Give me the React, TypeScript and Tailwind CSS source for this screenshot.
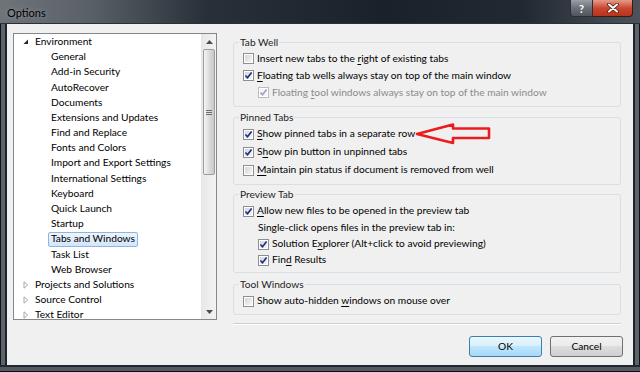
import React from 'react';

const FONT = "font-['Segoe_UI','Lato','Noto_Sans',sans-serif]";

// "&" marks the access key, as in a Win32 resource string
const Label = ({ text }: { text: string }) => {
  const i = text.indexOf('&');
  if (i < 0) return <>{text}</>;
  return (
    <>
      {text.slice(0, i)}
      <span className="underline underline-offset-[2px]">{text[i + 1]}</span>
      {text.slice(i + 2)}
    </>
  );
};

const CheckBox = ({ checked, disabled }: { checked?: boolean; disabled?: boolean }) => (
  <span
    className={`flex h-[11px] w-[11px] shrink-0 items-center justify-center border bg-white ${
      disabled ? 'border-[#bcbcbc]' : 'border-[#8e8f8f]'
    }`}
  >
    <span
      className={`flex h-[7px] w-[7px] items-center justify-center overflow-visible ${
        disabled ? 'bg-[#f4f4f4]' : 'bg-gradient-to-br from-[#d6d6d6] to-[#f6f6f6]'
      }`}
    >
      {checked && (
        <svg width="9" height="9" viewBox="0 0 9 9" className="shrink-0">
          <path
            d="M1.4 4.5 L3.5 6.8 L7.6 1.6"
            fill="none"
            stroke={disabled ? '#9aa4b8' : '#1d2a86'}
            strokeWidth="1.6"
          />
        </svg>
      )}
    </span>
  </span>
);

const Option = ({
  label,
  checked,
  disabled,
  indent,
  h,
}: {
  label: string;
  checked?: boolean;
  disabled?: boolean;
  indent?: boolean;
  h: string;
}) => (
  <div className={`flex items-center gap-[3px] ${indent ? 'pl-[24px]' : 'pl-[9px]'} ${h}`}>
    <CheckBox checked={checked} disabled={disabled} />
    <span className={`whitespace-nowrap ${disabled ? 'text-[#8a8a8a]' : 'text-black'}`}>
      <Label text={label} />
    </span>
  </div>
);

const Group = ({ title, className, children }: { title: string; className: string; children: React.ReactNode }) => (
  <fieldset className={`rounded-[3px] border border-[#d5dfe5] ${className}`}>
    <legend className="ml-[5px] px-[1px] leading-[16px] text-[#1e1e1e]">{title}</legend>
    {children}
  </fieldset>
);

type TreeItem = { name: string; level: 0 | 1; expanded?: boolean; selected?: boolean };

const tree: TreeItem[] = [
  { name: 'Environment', level: 0, expanded: true },
  { name: 'General', level: 1 },
  { name: 'Add-in Security', level: 1 },
  { name: 'AutoRecover', level: 1 },
  { name: 'Documents', level: 1 },
  { name: 'Extensions and Updates', level: 1 },
  { name: 'Find and Replace', level: 1 },
  { name: 'Fonts and Colors', level: 1 },
  { name: 'Import and Export Settings', level: 1 },
  { name: 'International Settings', level: 1 },
  { name: 'Keyboard', level: 1 },
  { name: 'Quick Launch', level: 1 },
  { name: 'Startup', level: 1 },
  { name: 'Tabs and Windows', level: 1, selected: true },
  { name: 'Task List', level: 1 },
  { name: 'Web Browser', level: 1 },
  { name: 'Projects and Solutions', level: 0 },
  { name: 'Source Control', level: 0 },
  { name: 'Text Editor', level: 0 },
];

const Expander = ({ expanded }: { expanded?: boolean }) => (
  <span className="flex w-[12px] shrink-0 items-center">
    {expanded ? (
      <svg width="6" height="6" viewBox="0 0 6 6">
        <path d="M5 0.5 L5 5 L0.5 5 Z" fill="#262626" />
      </svg>
    ) : (
      <svg width="6" height="8" viewBox="0 0 6 8">
        <path d="M1 0.8 L4.6 4 L1 7.2 Z" fill="#fff" stroke="#a6a6a6" strokeWidth="1" />
      </svg>
    )}
  </span>
);

const ScrollBar = () => (
  <div className="flex w-[15px] shrink-0 flex-col border-l border-[#e6e6e6] bg-gradient-to-r from-[#e8e8e8] to-[#f3f3f3]">
    <div className="flex h-[15px] items-center justify-center">
      <svg width="7" height="4" viewBox="0 0 7 4">
        <path d="M0 4 L3.5 0 L7 4 Z" fill="#4d4d4d" />
      </svg>
    </div>
    <div className="mx-[1px] flex h-[126px] items-center justify-center rounded-[2px] border border-[#9d9d9d] bg-gradient-to-r from-[#f5f5f5] via-[#dcdcdc] to-[#c9c9c9]">
      <div className="flex flex-col gap-[1px]">
        <span className="h-px w-[6px] bg-[#6e6e6e]" />
        <span className="h-px w-[6px] bg-[#6e6e6e]" />
        <span className="h-px w-[6px] bg-[#6e6e6e]" />
      </div>
    </div>
    <div className="flex-1" />
    <div className="flex h-[15px] items-center justify-center">
      <svg width="7" height="4" viewBox="0 0 7 4">
        <path d="M0 0 L3.5 4 L7 0 Z" fill="#4d4d4d" />
      </svg>
    </div>
  </div>
);

const TitleBar = () => (
  <div className="flex h-[24px] items-start justify-between border-b border-[#2a3038] bg-[linear-gradient(90deg,#6f747b_0%,#5a6067_14%,#2a3039_32%,#1b212a_60%,#222932_82%,#4c535b_100%)]">
    <span className="pl-[7px] pt-[5px] text-[11px] leading-[15px] text-black [text-shadow:0_0_5px_rgba(255,255,255,0.35)]">
      Options
    </span>
    <div className="mr-[7px] flex">
      <div className="flex h-[17px] w-[23px] items-center justify-center rounded-bl-[4px] border border-t-0 border-[#2b2f35] bg-gradient-to-b from-[#9aa0a7] via-[#6b7178] to-[#50565d] text-[11px] font-bold leading-none text-white">
        ?
      </div>
      <div className="flex h-[17px] w-[40px] items-center justify-center rounded-br-[4px] border border-l-0 border-t-0 border-[#3b1a14] bg-gradient-to-b from-[#e49a86] via-[#c9472f] to-[#b8321c]">
        <svg width="12" height="10" viewBox="0 0 12 10">
          <path d="M2 1.5 L10 8.5 M10 1.5 L2 8.5" stroke="#4a1c12" strokeWidth="3.6" strokeLinecap="round" />
          <path d="M2 1.5 L10 8.5 M10 1.5 L2 8.5" stroke="#fff" strokeWidth="2" strokeLinecap="round" />
        </svg>
      </div>
    </div>
  </div>
);

const Button = ({ children, primary }: { children: React.ReactNode; primary?: boolean }) => (
  <div
    className={`flex h-[21px] w-[73px] items-center justify-center rounded-[3px] border ${
      primary
        ? 'border-[#3c7fb1] bg-[linear-gradient(180deg,#eaf6fd_0%,#d9f0fc_48%,#bee6fd_50%,#a7d9f5_100%)]'
        : 'border-[#707070] bg-[linear-gradient(180deg,#f2f2f2_0%,#ebebeb_48%,#dddddd_50%,#cfcfcf_100%)]'
    }`}
  >
    {children}
  </div>
);

export default function App() {
  return (
    <div className={`flex h-[372px] w-[640px] flex-col bg-[#1c232c] text-[10.2px] ${FONT}`}>
      <TitleBar />
      <div className="flex h-[341px]">
        <div className="w-[7px] border-l border-r-2 border-l-[#0f1115] border-r-[#1f242b] bg-[#5d636a]" />
        <div className="relative flex w-[626px] flex-col bg-[#f0f0f0]">
          <div className="flex pl-[6px] pt-[9px]">
            {/* category tree */}
            <div className="flex h-[287px] w-[204px] border border-[#828790] bg-white">
              <div className="flex-1 overflow-hidden">
                {tree.map((item) => (
                  <div
                    key={item.name}
                    className={`flex h-[15.2px] items-center whitespace-nowrap text-black ${
                      item.level === 0 ? 'pl-[9px]' : 'pl-[37px]'
                    }`}
                  >
                    {item.level === 0 && <Expander expanded={item.expanded} />}
                    {item.selected ? (
                      <span className="-ml-[3px] flex h-[15px] items-center rounded-[2px] border border-[#8fb4e0] bg-gradient-to-b from-[#edf5fe] to-[#d3e5fb] px-[2px]">
                        {item.name}
                      </span>
                    ) : (
                      <span>{item.name}</span>
                    )}
                  </div>
                ))}
              </div>
              <ScrollBar />
            </div>

            {/* settings page */}
            <div className="ml-[16px] mt-[1px] flex w-[388px] flex-col">
              <Group title="Tab Well" className="pb-[5px]">
                <Option h="h-[17px]" label="Insert new tabs to the &right of existing tabs" />
                <Option h="h-[17px]" checked label="&Floating tab wells always stay on top of the main window" />
                <Option
                  h="h-[17px]"
                  checked
                  disabled
                  indent
                  label="Floating &tool windows always stay on top of the main window"
                />
              </Group>
              <Group title="Pinned Tabs" className="mt-[2px] pb-[5px]">
                <Option h="h-[18px]" checked label="&Show pinned tabs in a separate row" />
                <Option h="h-[18px]" checked label="S&how pin button in unpinned tabs" />
                <Option h="h-[18px]" label="&Maintain pin status if document is removed from well" />
              </Group>
              <Group title="Preview Tab" className="mt-[1px] pb-[4px]">
                <Option h="h-[18px]" checked label="&Allow new files to be opened in the preview tab" />
                <div className="flex h-[16px] items-center pl-[24px] text-black">
                  Single-click opens files in the preview tab in:
                </div>
                <Option h="h-[16px]" checked indent label="Solution E&xplorer (Alt+click to avoid previewing)" />
                <Option h="h-[16px]" checked indent label="Fin&d Results" />
              </Group>
              <Group title="Tool Windows" className="mt-[3px] pb-[4px]">
                <Option h="h-[18px]" label="Show auto-hidden &windows on mouse over" />
              </Group>
              <div className="mt-[8px] h-[2px] border-b border-t border-b-white border-t-[#d0d0d0]" />
            </div>
          </div>

          <div className="mt-[11px] flex justify-end gap-[8px] pr-[10px] text-black">
            <Button primary>OK</Button>
            <Button>Cancel</Button>
          </div>

          {/* red annotation arrow */}
          <svg className="absolute left-[408px] top-[98px]" width="78" height="24" viewBox="0 0 78 24">
            <path
              d="M2 12 L38 2.5 L38 6.5 L74 6.5 L74 16 L38 16 L38 21 Z"
              fill="none"
              stroke="#ec1c1c"
              strokeWidth="2.6"
              strokeLinejoin="round"
            />
          </svg>
        </div>
        <div className="w-[7px] border-l-2 border-r border-l-[#1f242b] border-r-[#0f1115] bg-[#5d636a]" />
      </div>
      <div className="h-[7px] border-b border-t-2 border-b-[#0b0c0e] border-t-[#23282f] bg-[#535a62]" />
    </div>
  );
}
